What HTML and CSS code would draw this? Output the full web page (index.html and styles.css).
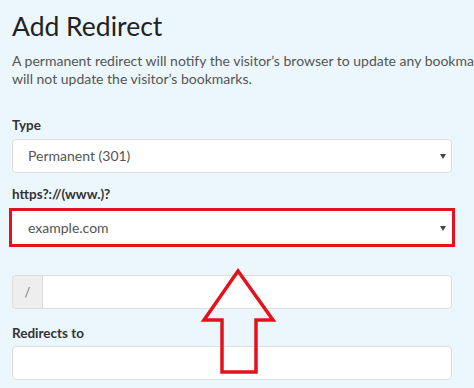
FILE: index.html
```html
<!DOCTYPE html>
<html lang="en">
<head>
<meta charset="UTF-8">
<title>Add Redirect</title>
<link rel="stylesheet" href="styles.css">
</head>
<body>
<div class="page">
<h1>Add Redirect</h1>
<p class="intro">A permanent redirect will notify the visitor’s browser to update any bookmarks that are linked. A temporary redirect<br>will not update the visitor’s bookmarks.</p>

<div class="field field-type">
<label>Type</label>
<div class="select">Permanent (301)</div>
</div>

<div class="field field-domain">
<label>https?://(www.)?</label>
<div class="highlight">
<div class="select">example.com</div>
</div>
</div>

<div class="field field-path">
<div class="input-group">
<span class="addon">/</span>
<div class="input"></div>
</div>
</div>

<div class="field field-target">
<label>Redirects to</label>
<div class="input"></div>
</div>

<!-- arrow drawn over the form as a callout -->
<svg class="callout" width="78" height="110" viewBox="0 0 78 110">
<polygon points="38,5 73,54 56,54 56,106 22,106 22,54 4,54" fill="none" stroke="#e4121b" stroke-width="3.5" stroke-linejoin="miter"/>
</svg>
</div>
</body>
</html>
```

FILE: styles.css
```css
body {
font-family: 'Lato', sans-serif;
margin: 0;
padding: 0;
background-color: #ebf7fd;
color: #333;
overflow: hidden;
}
.page {
position: relative;
width: 440px;
padding: 6px 12px 0;
}
h1 {
margin: 0;
font-size: 26.5px;
line-height: 40px;
font-weight: 400;
color: #222;
}
.intro {
margin: 6px 0 0;
font-size: 14px;
line-height: 18px;
color: #555;
white-space: nowrap;
}
.field label {
display: block;
font-size: 13.5px;
font-weight: 700;
line-height: 16px;
margin-bottom: 6px;
color: #333;
}
.field-type {
margin-top: 29px;
}
.field-domain {
margin-top: 13px;
}
.field-path {
margin-top: 28px;
}
.field-target {
margin-top: 16px;
}
.field-target label {
margin-bottom: 5px;
}
.select,
.input {
position: relative;
height: 34px;
box-sizing: border-box;
background: #fff;
border: 1px solid #ddd;
border-radius: 4px;
}
.select {
padding: 0 15px;
font-size: 14px;
line-height: 32px;
color: #555;
}
.select::after {
content: '';
position: absolute;
right: 5px;
top: 14px;
border-left: 3px solid transparent;
border-right: 3px solid transparent;
border-top: 5px solid #444;
}
.highlight {
margin: 0 -3px;
border: 3px solid #e4121b;
}
.highlight .select {
height: 33px;
border-color: #fff;
border-radius: 0;
}
.input-group {
display: flex;
height: 34px;
}
.addon {
width: 30px;
box-sizing: border-box;
background: #eee;
border: 1px solid #ddd;
border-right: none;
border-radius: 4px 0 0 4px;
text-align: center;
font-size: 13px;
line-height: 32px;
color: #777;
}
.input-group .input {
flex: 1;
border-radius: 0 4px 4px 0;
}
.callout {
position: absolute;
left: 200px;
top: 266px;
}
```
